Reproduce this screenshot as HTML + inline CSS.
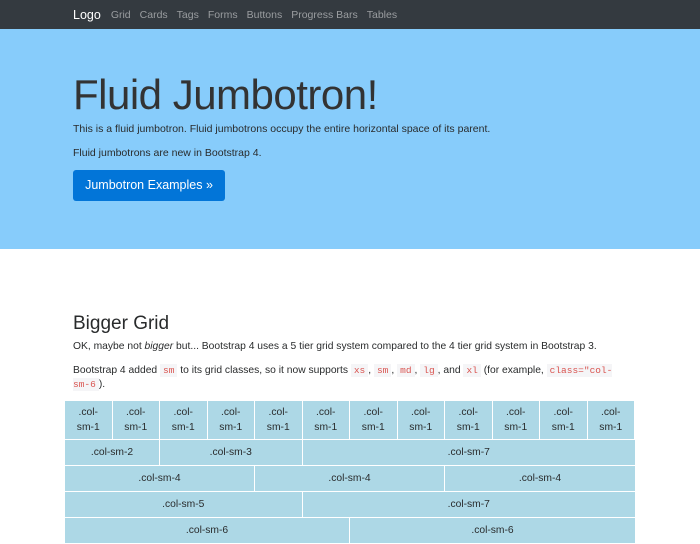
<!DOCTYPE html>
<html><head><style>
*{box-sizing:border-box;margin:0;padding:0}
body{width:700px;height:529px;overflow:hidden;font-family:"Liberation Sans",sans-serif;color:#292b2c;background:#fff;font-size:11px}
.nav{height:29px;background:#343a40;display:flex;align-items:center;padding-left:73px}
.nav b{color:#fff;font-weight:normal;font-size:12.5px;margin-right:10px}
.nav a{color:#9a9da0;font-size:10.5px;margin-right:9px}
.jumbo{height:220px;background:#87ccfb;padding-left:73px;padding-top:41px}
h1{font-weight:300;font-size:42px;color:#333;line-height:50px;letter-spacing:-0.5px}
.jumbo p{font-size:10.5px;margin-top:2px;line-height:14px}
.jumbo p+p{margin-top:10px}
.btn{display:inline-block;margin-top:10px;background:#0275d8;color:#fff;font-size:12.5px;width:152px;height:31px;line-height:31px;text-align:center;border-radius:3px}
.c{padding-left:73px;padding-right:65px}
h2{font-weight:normal;font-size:19px;margin-top:63px;line-height:24px}
.c p{font-size:10.3px;line-height:14px;margin-top:4px}
.c p+p{margin-top:10px}
code{font-family:"Liberation Mono",monospace;color:#d9534f;background:#f5f5f7;font-size:9.5px;padding:1px 3px}
.g{position:absolute;left:65px;top:401px;width:571px}
.r{display:flex}
.r div{background:#add8e6;border:1px solid #fff;border-top:0;border-left:0;text-align:center;font-size:10.3px;display:flex;align-items:center;justify-content:center;height:26px}
.r1 div{height:39px;width:47.5px;line-height:15px}
</style></head><body>
<div class="nav"><b>Logo</b><a>Grid</a><a>Cards</a><a>Tags</a><a>Forms</a><a>Buttons</a><a>Progress Bars</a><a>Tables</a></div>
<div class="jumbo"><h1>Fluid Jumbotron!</h1>
<p>This is a fluid jumbotron. Fluid jumbotrons occupy the entire horizontal space of its parent.</p>
<p>Fluid jumbotrons are new in Bootstrap 4.</p>
<span class="btn">Jumbotron Examples »</span></div>
<div class="c"><h2>Bigger Grid</h2>
<p>OK, maybe not <i>bigger</i> but... Bootstrap 4 uses a 5 tier grid system compared to the 4 tier grid system in Bootstrap 3.</p>
<p>Bootstrap 4 added <code>sm</code> to its grid classes, so it now supports <code>xs</code>, <code>sm</code>, <code>md</code>, <code>lg</code>, and <code>xl</code> (for example, <code>class="col-<br>sm-6</code>).</p></div>
<div class="g">
<div class="r r1"><div>.col-<br>sm-1</div><div>.col-<br>sm-1</div><div>.col-<br>sm-1</div><div>.col-<br>sm-1</div><div>.col-<br>sm-1</div><div>.col-<br>sm-1</div><div>.col-<br>sm-1</div><div>.col-<br>sm-1</div><div>.col-<br>sm-1</div><div>.col-<br>sm-1</div><div>.col-<br>sm-1</div><div>.col-<br>sm-1</div></div>
<div class="r"><div style="width:95px">.col-sm-2</div><div style="width:142.5px">.col-sm-3</div><div style="width:333.5px">.col-sm-7</div></div>
<div class="r"><div style="width:190px">.col-sm-4</div><div style="width:190px">.col-sm-4</div><div style="width:191px">.col-sm-4</div></div>
<div class="r"><div style="width:237.5px">.col-sm-5</div><div style="width:333.5px">.col-sm-7</div></div>
<div class="r"><div style="width:285px">.col-sm-6</div><div style="width:286px">.col-sm-6</div></div>
</div>
</body></html>
